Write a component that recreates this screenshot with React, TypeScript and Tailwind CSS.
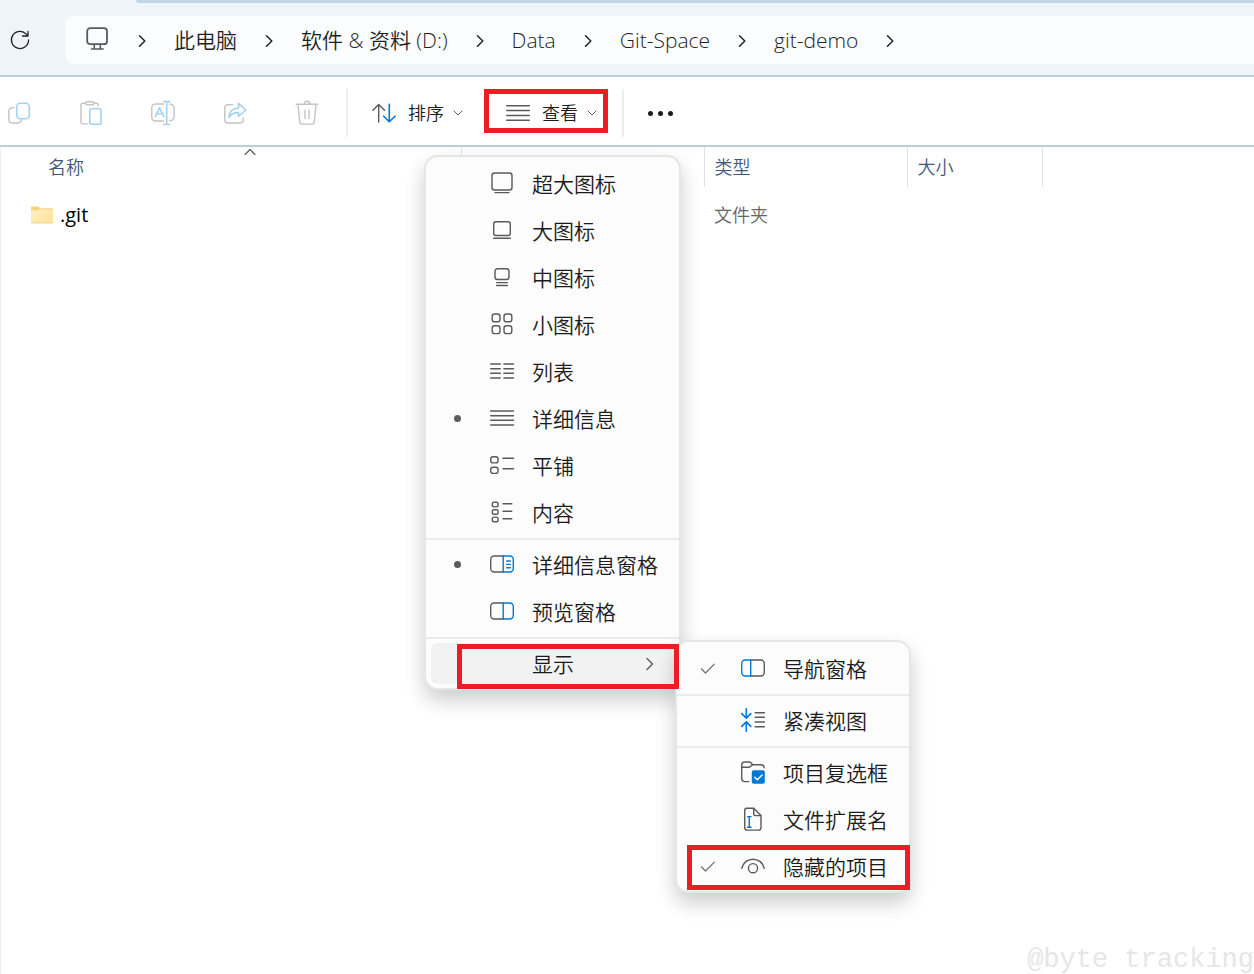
import React from 'react';
import clsx from 'clsx';

type IconProps = { children: React.ReactNode; w?: number; h?: number; className?: string };

const Svg = ({ children, w = 28, h = 27, className = '' }: IconProps) => (
  <svg
    width={w}
    height={h}
    viewBox={`0 0 ${w} ${h}`}
    fill="none"
    stroke="#5a5a5a"
    strokeWidth="1.4"
    strokeLinecap="round"
    strokeLinejoin="round"
    className={clsx('shrink-0', className)}
    aria-hidden="true"
  >
    {children}
  </svg>
);

const BLUE = '#0078d4';
const PALE = '#a5d2f3';
const DIM = '#c4c4c4';

/* ---------- menu icons ---------- */
const ExtraLargeIcon = () => (
  <Svg><rect x="4" y="2" width="20" height="17" rx="2.5" /><path d="M7 21.6h14" /></Svg>
);
const LargeIcon = () => (
  <Svg><rect x="5.7" y="3.7" width="16.6" height="13.8" rx="2.2" /><path d="M5.7 20.3h16.6" /></Svg>
);
const MediumIcon = () => (
  <Svg><rect x="7" y="3.7" width="14" height="10.8" rx="2.5" /><path d="M8.6 17.6h10.8M8.6 20.5h10.8" /></Svg>
);
const SmallIcon = () => (
  <Svg>
    <rect x="4.2" y="2" width="7.8" height="7.8" rx="2.4" />
    <rect x="16" y="2" width="7.8" height="7.8" rx="2.4" />
    <rect x="4.2" y="13.8" width="7.8" height="7.8" rx="2.4" />
    <rect x="16" y="13.8" width="7.8" height="7.8" rx="2.4" />
  </Svg>
);
const ListIcon = () => (
  <Svg><path d="M2.7 5h9.6M2.7 9.7h9.6M2.7 14.3h9.6M2.7 19h9.6M15.9 5h9.6M15.9 9.7h9.6M15.9 14.3h9.6M15.9 19h9.6" /></Svg>
);
const DetailsIcon = () => (
  <Svg><path d="M2.7 5h22.8M2.7 9.7h22.8M2.7 14.3h22.8M2.7 19h22.8" /></Svg>
);
const TilesIcon = () => (
  <Svg>
    <rect x="2.7" y="3.7" width="7.4" height="6.2" rx="2.4" />
    <rect x="2.7" y="14.2" width="7.4" height="6.2" rx="2.4" />
    <path d="M15 5.2h10.5M15 15.7h10.5" />
  </Svg>
);
const ContentIcon = () => (
  <Svg>
    <rect x="4.3" y="2.3" width="5.8" height="4.6" rx="1.8" />
    <rect x="4.3" y="9.7" width="5.8" height="4.6" rx="1.8" />
    <rect x="4.3" y="17.1" width="5.8" height="4.6" rx="1.8" />
    <path d="M15 3.8h8.8M15 11.2h8.8M15 18.7h8.8" />
  </Svg>
);
const DetailsPaneIcon = () => (
  <Svg>
    <path d="M15.2 4H6.2a3.5 3.5 0 0 0-3.5 3.5v9A3.5 3.5 0 0 0 6.2 20h9" />
    <path stroke={BLUE} d="M15.2 4h6.6a3.5 3.5 0 0 1 3.5 3.5v9a3.5 3.5 0 0 1-3.5 3.5h-6.6zM18.7 9h3.6M18.7 12.4h3.6M18.7 15.8h3.6" />
  </Svg>
);
const PreviewPaneIcon = () => (
  <Svg>
    <path d="M15.2 4H6.2a3.5 3.5 0 0 0-3.5 3.5v9A3.5 3.5 0 0 0 6.2 20h9" />
    <path stroke={BLUE} d="M15.2 4h6.6a3.5 3.5 0 0 1 3.5 3.5v9a3.5 3.5 0 0 1-3.5 3.5h-6.6z" />
  </Svg>
);
const NavPaneIcon = () => (
  <Svg>
    <path d="M12 4h9.8a3.5 3.5 0 0 1 3.5 3.5v9a3.5 3.5 0 0 1-3.5 3.5H12" />
    <path stroke={BLUE} d="M11.7 4H6.2a3.5 3.5 0 0 0-3.5 3.5v9A3.5 3.5 0 0 0 6.2 20h5.5z" />
  </Svg>
);
const CompactIcon = () => (
  <Svg>
    <path stroke={BLUE} strokeWidth="1.6" d="M7.3 .8v9.2M2.8 5.6l4.5 4.5 4.5-4.5M7.3 23.2V14M2.8 18.4l4.5-4.5 4.5 4.5" />
    <path d="M16.2 4.7h9.2M16.2 9.3h9.2M16.2 14h9.2M16.2 18.7h9.2" />
  </Svg>
);
const CheckBoxesIcon = () => (
  <Svg>
    <path d="M9.8 21.6H5.7a3 3 0 0 1-3-3V5A3 3 0 0 1 5.7 2h4.2c1 0 1.6.3 2.2 1l1.5 1.7h8.2a3.2 3.2 0 0 1 3.3 3" />
    <path d="M2.7 7.3h6.6c1 0 1.7-.3 2.4-1l1.7-1.6" />
    <rect x="12.8" y="10.3" width="13" height="13.4" rx="2" fill={BLUE} stroke="none" />
    <path stroke="#fff" d="M15.7 17.2l2.6 2.6 4.8-4.8" />
  </Svg>
);
const ExtensionIcon = () => (
  <Svg>
    <path d="M7.7 1.2h7l7.3 7.3v12.2a2.4 2.4 0 0 1-2.4 2.4H8.1a2.4 2.4 0 0 1-2.4-2.4V3.4a2.2 2.2 0 0 1 2-2.2z" />
    <path d="M14.7 1.4v5.4a1.8 1.8 0 0 0 1.8 1.8h5.2" />
    <path stroke={BLUE} d="M10.3 9.8v10.4M8.5 9.6h3.6M8.5 20.3h3.6" />
  </Svg>
);
const EyeIcon = () => (
  <Svg><path d="M2.8 14.4C4 8.6 8.6 5.2 14 5.2s10 3.4 11.2 9.2" /><circle cx="14" cy="14.2" r="4.6" /></Svg>
);
const CheckIcon = () => (
  <Svg w={16} h={13}><path stroke="#6e6e6e" strokeWidth="1.2" d="M1.5 7l4 4L14.3 2.2" /></Svg>
);

/* ---------- toolbar icons ---------- */
const CopyIcon = () => (
  <Svg w={26} h={26}>
    <path stroke={DIM} d="M8 7.7H6.4a3.6 3.6 0 0 0-3.6 3.6v8.2A3.6 3.6 0 0 0 6.4 23H12a3.6 3.6 0 0 0 3.5-3" />
    <rect stroke={PALE} strokeWidth="1.6" x="10.7" y="3.3" width="12.6" height="15.4" rx="3.5" />
  </Svg>
);
const PasteIcon = () => (
  <Svg w={26} h={26}>
    <path stroke={DIM} d="M7.5 3.3H4.8A1.8 1.8 0 0 0 3 5.1v17a1.8 1.8 0 0 0 1.8 1.8h4.4M16 3.3h2.4a1.8 1.8 0 0 1 1.8 1.8v.6" />
    <rect stroke={DIM} x="7.7" y="1.7" width="8.3" height="3" rx="1.5" />
    <rect stroke={PALE} strokeWidth="1.6" x="11.8" y="8.8" width="11.2" height="15.4" rx="1.8" />
  </Svg>
);
const RenameIcon = () => (
  <Svg w={26} h={26}>
    <path stroke={DIM} d="M13.5 4H5.3a3.5 3.5 0 0 0-3.5 3.5v10A3.5 3.5 0 0 0 5.3 21h8.2M20 4.3a4 4 0 0 1 4.2 3.8v8.6a4 4 0 0 1-4.2 4" />
    <path stroke={PALE} strokeWidth="1.6" d="M5.3 16.7L9.6 7.8l4.3 8.9M6.9 13.7h5.4M16.7 1.8v22.5M13.7 1.6h6M13.7 24.5h6" />
  </Svg>
);
const ShareIcon = () => (
  <Svg w={26} h={26}>
    <path stroke={DIM} d="M10.5 4.7H6A3.2 3.2 0 0 0 2.8 8v11.8A3.2 3.2 0 0 0 6 23h12a3.2 3.2 0 0 0 3.2-3.2V18" />
    <path stroke={PALE} strokeWidth="1.6" d="M16.5 3.3l7.3 6.7-7.3 6.3v-3.7c-4.3-.1-7.3 1.4-9.7 4.7.6-5.3 4.2-9 9.7-9.3z" />
  </Svg>
);
const TrashIcon = () => (
  <Svg w={26} h={26}>
    <path stroke={DIM} d="M2.3 4.3h21.4M10.2 4a2.8 2.8 0 0 1 5.6 0M4 4.5l1.7 17a2.7 2.7 0 0 0 2.7 2.6h9.2a2.7 2.7 0 0 0 2.7-2.6l1.7-17M11 10.3v8.2M15 10.3v8.2" />
  </Svg>
);
const SortIcon = () => (
  <Svg w={24} h={26}>
    <path d="M6.7 22V4.5M.9 10.2l5.8-5.8 5.8 5.8" />
    <path stroke={BLUE} strokeWidth="1.6" d="M17.3 4.2v17.5M11.7 16.2l5.6 5.6 5.7-5.6" />
  </Svg>
);
const ViewIcon = () => (
  <Svg w={24} h={26}><path d="M.7 5.7h22.6M.7 10.5h22.6M.7 15.5h22.6M.7 20.3h22.6" /></Svg>
);
const DownCaret = () => (
  <Svg w={10} h={6}><path strokeWidth="1" d="M1 1l4 4 4-4" /></Svg>
);
const Chevron = () => (
  <Svg w={8} h={14} className="mt-[2px]"><path stroke="#222" strokeWidth="1.5" d="M1.5 1.7L6.8 7l-5.3 5.3" /></Svg>
);

/* red frame drawn around a highlighted control */
const Marker = ({ className }: { className: string }) => (
  <span className={clsx('absolute z-10 border-[5px] border-[#ee1c25] pointer-events-none', className)} />
);

type Item = {
  label: string;
  icon?: React.ReactNode;
  mark?: 'dot' | 'check';
  arrow?: boolean;
};

const viewModes: Item[] = [
  { label: '超大图标', icon: <ExtraLargeIcon /> },
  { label: '大图标', icon: <LargeIcon /> },
  { label: '中图标', icon: <MediumIcon /> },
  { label: '小图标', icon: <SmallIcon /> },
  { label: '列表', icon: <ListIcon /> },
  { label: '详细信息', icon: <DetailsIcon />, mark: 'dot' },
  { label: '平铺', icon: <TilesIcon /> },
  { label: '内容', icon: <ContentIcon /> },
];

const paneItems: Item[] = [
  { label: '详细信息窗格', icon: <DetailsPaneIcon />, mark: 'dot' },
  { label: '预览窗格', icon: <PreviewPaneIcon /> },
];

const MenuItem = ({ label, icon, mark, arrow }: Item) => (
  <button type="button" className="relative flex h-[47px] w-full items-center text-left">
    <span className="flex w-[62px] shrink-0 justify-center pb-[2px]">
      {mark === 'dot' && <span className="size-[7px] rounded-full bg-[#5c5c5c]" />}
      {mark === 'check' && <CheckIcon />}
    </span>
    <span className="mr-4 w-7 shrink-0">{icon}</span>
    <span className="flex-1 pb-[2px] whitespace-nowrap">{label}</span>
    {arrow && (
      <Svg w={10} h={14} className="mr-6 mb-[2px]"><path d="M2 1.5L7.5 7 2 12.5" /></Svg>
    )}
  </button>
);

const Separator = () => <li role="separator" className="mt-px mb-[2px] h-[2px] bg-[#ebebeb]" />;

const menuBox =
  'absolute rounded-[14px] border-2 border-[#e6e6e6] bg-[#fcfcfc] pt-1 text-[21px] leading-7 text-[#1b1b1b] shadow-[0_10px_20px_rgba(0,0,0,0.2)]';

const ShowMenu = () => (
  <ul className={clsx(menuBox, '-top-px left-full -ml-1 w-[236px]')}>
    <li><MenuItem label="导航窗格" icon={<NavPaneIcon />} mark="check" /></li>
    <Separator />
    <li><MenuItem label="紧凑视图" icon={<CompactIcon />} /></li>
    <Separator />
    <li><MenuItem label="项目复选框" icon={<CheckBoxesIcon />} /></li>
    <li><MenuItem label="文件扩展名" icon={<ExtensionIcon />} /></li>
    <li className="relative">
      <MenuItem label="隐藏的项目" icon={<EyeIcon />} mark="check" />
      <Marker className="top-px right-[-1px] bottom-px left-[10px]" />
    </li>
  </ul>
);

const ViewMenu = () => (
  <ul className={clsx(menuBox, 'top-[66px] -left-[60px] z-20 w-[257px]')}>
    {viewModes.map((item) => (
      <li key={item.label}><MenuItem {...item} /></li>
    ))}
    <Separator />
    {paneItems.map((item) => (
      <li key={item.label}><MenuItem {...item} /></li>
    ))}
    <Separator />
    <li className="relative">
      <span className="absolute top-[2px] right-1 bottom-1 left-[5px] rounded-md bg-[#f2f2f2]" />
      <MenuItem label="显示" arrow />
      <ShowMenu />
      <Marker className="top-[3px] right-0 bottom-[-1px] left-[31px]" />
    </li>
  </ul>
);

const crumbs = ['此电脑', '软件 & 资料 (D:)', 'Data', 'Git-Space', 'git-demo'];

const AddressBar = () => (
  <header className="border-b-2 border-[#bccddb] bg-[#eff4f9]">
    <div className="ml-[136px] h-[3px] rounded-bl-sm bg-[#c1d5e3]" />
    <div className="flex items-center pt-[13px] pb-[11px]">
      <button type="button" aria-label="刷新" className="flex w-[65px] shrink-0 pl-2">
        <Svg w={24} h={24}>
          <path stroke="#222" strokeWidth="1.3" d="M20.6 12a8.6 8.6 0 1 1-2.3-5.9l1.7 1.8M20 3.5V8h-5.5" />
        </Svg>
      </button>
      <nav className="flex h-12 flex-1 items-center gap-7 rounded-l-lg bg-[#fbfcfe] pb-px pl-5 text-[21px] leading-7 whitespace-nowrap text-[#1f1f1f]">
        <Svg w={25} h={26} className="mb-[2px]">
          <rect x="2.2" y="2.2" width="19.8" height="16" rx="3" strokeWidth="1.8" />
          <path strokeWidth="1.6" d="M9.3 18.7v3.5M15.3 18.7v3.5M6.5 23h11.6" />
        </Svg>
        <Chevron />
        {crumbs.map((name) => (
          <React.Fragment key={name}>
            <a href="#">{name}</a>
            <Chevron />
          </React.Fragment>
        ))}
      </nav>
    </div>
  </header>
);

const fileActions = [
  { label: '复制', icon: <CopyIcon /> },
  { label: '粘贴', icon: <PasteIcon /> },
  { label: '重命名', icon: <RenameIcon /> },
  { label: '共享', icon: <ShareIcon /> },
  { label: '删除', icon: <TrashIcon /> },
];

const Toolbar = () => (
  <div className="flex items-center border-b-2 border-[#bccddb] bg-white pt-3 pb-2 text-lg text-[#1b1b1b]">
    <div className="flex gap-[34px]">
      {fileActions.map(({ label, icon }) => (
        <button key={label} type="button" disabled aria-label={label} className="flex h-12 w-[38px] items-center justify-center">
          {icon}
        </button>
      ))}
    </div>
    <div className="ml-5 h-12 w-[2px] bg-[#ededed]" />
    <button type="button" className="ml-6 flex h-12 items-center">
      <SortIcon />
      <span className="mr-[9px] ml-3">排序</span>
      <DownCaret />
    </button>
    <div className="relative ml-[21px]">
      <button type="button" aria-expanded="true" className="flex h-12 items-center pr-[11px] pl-[22px]">
        <ViewIcon />
        <span className="mr-[9px] ml-3">查看</span>
        <DownCaret />
      </button>
      <Marker className="inset-x-0 top-0 bottom-1" />
      <ViewMenu />
    </div>
    <div className="ml-[14px] h-12 w-[2px] bg-[#ededed]" />
    <button type="button" aria-label="更多" className="ml-6 flex h-12 items-center gap-[5px]">
      <span className="size-[5px] rounded-full bg-[#1b1b1b]" />
      <span className="size-[5px] rounded-full bg-[#1b1b1b]" />
      <span className="size-[5px] rounded-full bg-[#1b1b1b]" />
    </button>
  </div>
);

const FolderIcon = () => (
  <svg width="22" height="18" viewBox="0 0 22 18" aria-hidden="true">
    <defs>
      <linearGradient id="folder" x1="0" y1="0" x2="1" y2="1">
        <stop offset="0" stopColor="#fff0c4" />
        <stop offset="1" stopColor="#ffe19a" />
      </linearGradient>
    </defs>
    <path d="M0 1.5Q0 .5 1 .5h6q.6 0 1 .6l.8 1.2H21q1 0 1 1V8H0z" fill="#f7d27c" />
    <path d="M0 4.5h7l1.5-1.2H22v13q0 1-1 1H1q-1 0-1-1z" fill="url(#folder)" />
    <path d="M.3 16.9h21.4" stroke="#efcf85" strokeWidth=".8" />
  </svg>
);

const FileList = () => (
  <main className="flex-1 border-l border-[#efefef]">
    <table className="w-full table-fixed text-left text-lg leading-6">
      <colgroup>
        <col className="w-[460px]" />
        <col className="w-[243px]" />
        <col className="w-[203px]" />
        <col className="w-[135px]" />
        <col />
      </colgroup>
      <thead className="text-[#42587a]">
        <tr className="h-10 align-top *:font-[350]">
          <th className="border-r border-[#e2e2e2] pl-[38px]">
            <Svg w={12} h={6} className="mx-auto mt-[2px]"><path strokeWidth="1.1" d="M1 5.5l5-5 5 5" /></Svg>
            <span className="ml-[9px] block">名称</span>
          </th>
          <th aria-label="修改日期" className="border-r border-[#e2e2e2]" />
          <th className="border-r border-[#e2e2e2] pt-2 pl-[10px]">类型</th>
          <th className="border-r border-[#e2e2e2] pt-2 pl-[10px]">大小</th>
          <td />
        </tr>
      </thead>
      <tbody>
        <tr className="h-14">
          <td className="pl-[30px]">
            <a href="#" className="flex items-center gap-[7px] text-[20px] font-normal text-black">
              <FolderIcon />
              .git
            </a>
          </td>
          <td />
          <td className="pl-[10px] text-[#666]">文件夹</td>
          <td />
          <td />
        </tr>
      </tbody>
    </table>
  </main>
);

export default function App() {
  return (
    <div className="relative flex min-h-screen flex-col overflow-hidden bg-white font-['Open_Sans','Noto_Sans_CJK_SC',sans-serif] font-[350]">
      <AddressBar />
      <Toolbar />
      <FileList />
      <p className="absolute right-0 bottom-0 font-['Liberation_Mono',monospace] text-[27px] leading-7 text-[#e6e6e6]">
        @byte tracking
      </p>
    </div>
  );
}
